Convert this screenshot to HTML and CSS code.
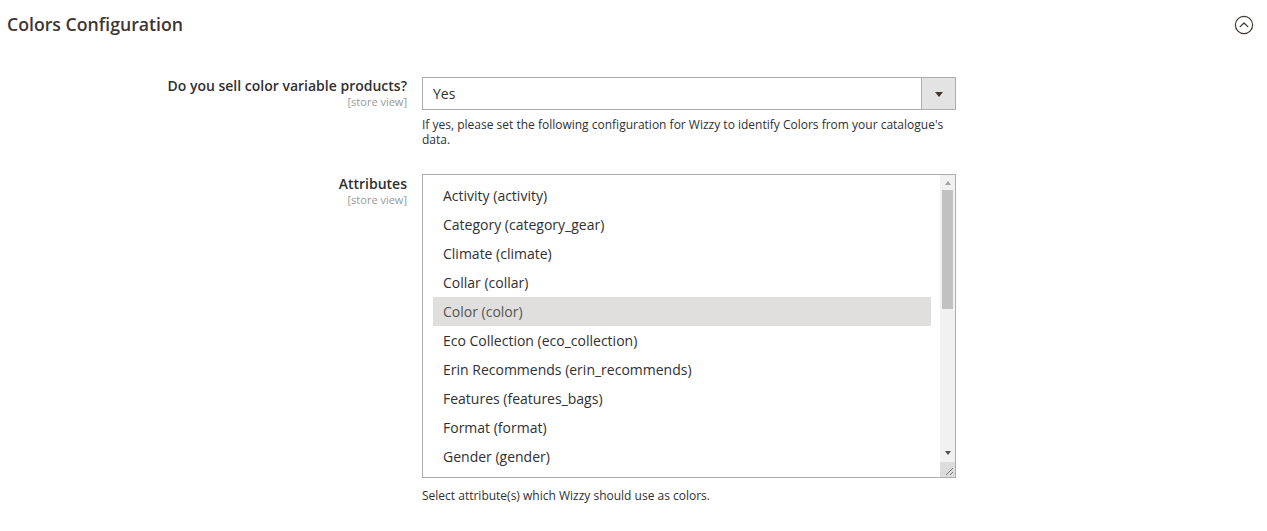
FILE: index.html
```html
<!DOCTYPE html>
<html lang="en">
<head>
<meta charset="utf-8">
<title>Colors Configuration</title>
<link rel="stylesheet" href="styles.css">
</head>
<body>
<div class="section">
  <div class="section-head">
    <h2 class="section-title">Colors Configuration</h2>
    <svg class="collapse-icon" width="20" height="20" viewBox="0 0 20 20" aria-hidden="true">
      <circle cx="10" cy="10" r="8.6" fill="none" stroke="#41362f" stroke-width="1.2"/>
      <polyline points="6.2,11.6 10,8 13.8,11.6" fill="none" stroke="#41362f" stroke-width="1.3" stroke-linejoin="round" stroke-linecap="round"/>
    </svg>
  </div>

  <div class="form">
    <div class="row">
      <div class="label">
        <div class="label-text">Do you sell color variable products?</div>
        <div class="scope">[store view]</div>
      </div>
      <div class="control control-first">
        <div class="select">
          <span class="select-value">Yes</span>
          <span class="select-btn"><span class="tri-down"></span></span>
        </div>
        <div class="note note-first">If yes, please set the following configuration for Wizzy to identify Colors from your catalogue's data.</div>
      </div>
    </div>

    <div class="row row-second">
      <div class="label">
        <div class="label-text">Attributes</div>
        <div class="scope">[store view]</div>
      </div>
      <div class="control control-second">
        <div class="multiselect">
          <div class="options">
            <div class="option">Activity (activity)</div>
            <div class="option">Category (category_gear)</div>
            <div class="option">Climate (climate)</div>
            <div class="option">Collar (collar)</div>
            <div class="option option-selected">Color (color)</div>
            <div class="option">Eco Collection (eco_collection)</div>
            <div class="option">Erin Recommends (erin_recommends)</div>
            <div class="option">Features (features_bags)</div>
            <div class="option">Format (format)</div>
            <div class="option">Gender (gender)</div>
          </div>
          <div class="scrollbar">
            <div class="sb-btn"><span class="sb-up"></span></div>
            <div class="sb-track"><div class="sb-thumb"></div></div>
            <div class="sb-btn"><span class="sb-down"></span></div>
            <div class="sb-resizer">
              <svg width="15" height="15" viewBox="0 0 15 15" aria-hidden="true">
                <line x1="13" y1="6" x2="6" y2="13" stroke="#7a7a7a" stroke-width="1"/>
                <line x1="13" y1="10" x2="10" y2="13" stroke="#7a7a7a" stroke-width="1"/>
              </svg>
            </div>
          </div>
        </div>
        <div class="note note-second">Select attribute(s) which Wizzy should use as colors.</div>
      </div>
    </div>
  </div>
</div>
</body>
</html>
```

FILE: styles.css
```css
* {
  box-sizing: border-box;
}

html, body {
  margin: 0;
  padding: 0;
  background: #ffffff;
}

body {
  font-family: "Open Sans", "Noto Sans", "Liberation Sans", sans-serif;
  color: #303030;
  width: 1267px;
  height: 531px;
  overflow: hidden;
}

.section-head {
  display: flex;
  justify-content: space-between;
  align-items: flex-start;
  padding: 12px 13px 0 7px;
}

.section-title {
  margin: 0;
  font-size: 17.7px;
  font-weight: 600;
  line-height: 25px;
  color: #41362f;
}

.collapse-icon {
  display: block;
  margin-top: 3px;
}

.form {
  margin-top: 38px;
}

.row {
  display: flex;
  align-items: flex-start;
}

.row-second {
  margin-top: 26px;
}

.label {
  width: 407px;
  text-align: right;
  flex-shrink: 0;
  padding-top: 2px;
}

.label-text {
  font-size: 14px;
  font-weight: 600;
  line-height: 18px;
  color: #303030;
}

.scope {
  font-size: 11px;
  line-height: 13px;
  color: #999999;
}

.control {
  width: 534px;
  margin-left: 15px;
}

.control-first {
  margin-top: 2px;
}

.control-second {
  margin-top: 1px;
}

.select {
  display: flex;
  align-items: stretch;
  height: 33px;
  border: 1px solid #adadad;
  background: #ffffff;
}

.select-value {
  flex: 1;
  padding-left: 10px;
  font-size: 14px;
  line-height: 31px;
  color: #303030;
}

.select-btn {
  width: 34px;
  background: #e3e3e3;
  border-left: 1px solid #adadad;
  display: flex;
  align-items: center;
  justify-content: center;
}

.tri-down {
  width: 0;
  height: 0;
  border-left: 4px solid transparent;
  border-right: 4px solid transparent;
  border-top: 5px solid #41362f;
  margin-top: 1px;
}

.note {
  font-size: 12px;
  line-height: 15px;
  color: #303030;
}

.note-first {
  margin-top: 7px;
}

.note-second {
  margin-top: 10px;
}

.multiselect {
  display: flex;
  height: 304px;
  border: 1px solid #adadad;
  background: #ffffff;
}

.options {
  flex: 1;
  overflow: hidden;
  padding: 6px 9px 0 10px;
}

.option {
  height: 29px;
  line-height: 29px;
  padding-left: 10px;
  font-size: 14px;
  color: #303030;
  white-space: nowrap;
}

.option-selected {
  background: #e0dfdd;
  color: #555555;
}

.scrollbar {
  width: 15px;
  display: flex;
  flex-direction: column;
  background: #f1f1f1;
}

.sb-btn {
  height: 15px;
  display: flex;
  align-items: center;
  justify-content: center;
}

.sb-up {
  width: 0;
  height: 0;
  border-left: 3.5px solid transparent;
  border-right: 3.5px solid transparent;
  border-bottom: 4px solid #a3a3a3;
}

.sb-down {
  width: 0;
  height: 0;
  border-left: 3.5px solid transparent;
  border-right: 3.5px solid transparent;
  border-top: 4px solid #505050;
  margin-top: -3px;
}

.sb-track {
  flex: 1;
  padding: 0 2px;
}

.sb-thumb {
  height: 119px;
  background: #c1c1c1;
}

.sb-resizer {
  height: 15px;
  background: #dcdcdc;
}

.sb-resizer svg {
  display: block;
}
```
